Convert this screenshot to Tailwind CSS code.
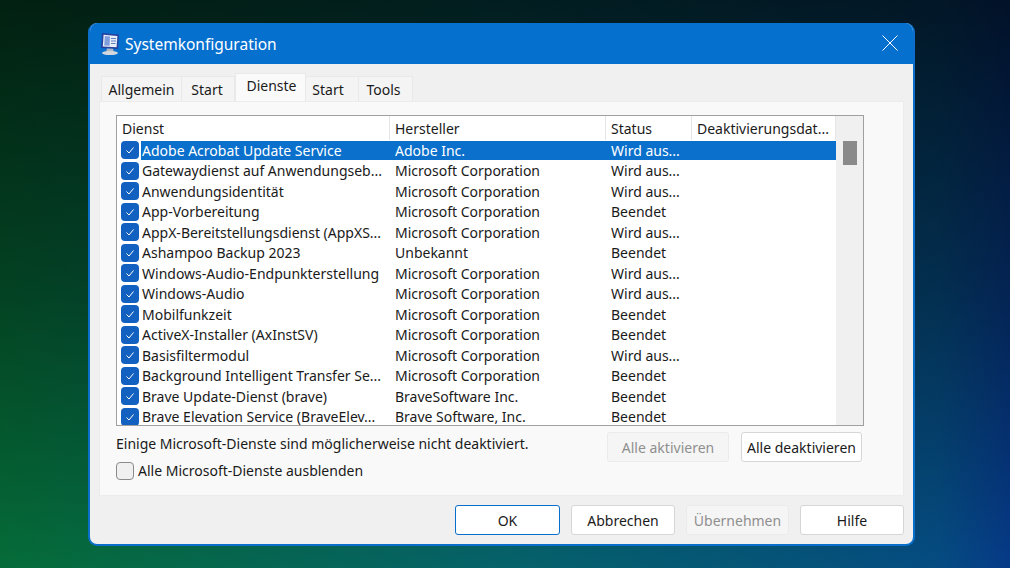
<!DOCTYPE html>
<html lang="de">
<head>
    <meta charset="UTF-8">
    <title>Systemkonfiguration</title>
    <script src="https://cdn.jsdelivr.net/npm/@tailwindcss/browser@4"></script>
</head>
<body class="font-['Noto_Sans','Open_Sans',sans-serif]">
    <div class="w-[1010px] h-[568px] overflow-hidden pt-[23px] pl-[88px] bg-[linear-gradient(to_bottom,rgba(0,0,0,0.7)_0%,rgba(0,0,0,0.4)_50%,rgba(0,0,0,0)_100%),linear-gradient(to_right,#056c38_0%,#05626a_50%,#054c82_93%,#063a88_100%)]">
        <!-- Dialog -->
        <div class="w-[827px] h-[523px] rounded-[9px] bg-[#f0f0f0] border-2 border-t-0 border-[#0a6fca] flex flex-col overflow-hidden">
            <!-- Title bar -->
            <div class="h-[41px] shrink-0 bg-[#0670cf] flex items-center justify-between -mx-[2px] pl-[11px] pr-[17px] text-white">
                <div class="flex items-center gap-[4px]">
                    <svg width="22" height="24" viewBox="0 0 22 24">
                        <path d="M3 1 L20 2.5 L19 17 L2 16 Z" fill="#27409e"/>
                        <path d="M4.6 2.8 L18.4 4 L17.6 15.2 L3.8 14.5 Z" fill="#e8edf6"/>
                        <path d="M5.8 4 L11 4.5 L10.6 13.8 L5.2 13.5 Z" fill="#7f9fdc"/>
                        <path d="M12 6.5 H17 M12 9 H17 M12 11.5 H16.6" stroke="#5f7fc0" stroke-width="1"/>
                        <path d="M8 16.5 L14 16.8 L15 20 L7 20 Z" fill="#b0b8c6"/>
                        <ellipse cx="11" cy="21" rx="8" ry="2" fill="#d4d8de"/>
                    </svg>
                    <span class="text-[15.5px] leading-none pt-[3px]">Systemkonfiguration</span>
                </div>
                <svg class="-mt-[1px]" width="16" height="16" viewBox="0 0 16 16" fill="none" stroke="#ffffff" stroke-width="1">
                    <path d="M0.5 0.5 L15.5 15.5 M15.5 0.5 L0.5 15.5"/>
                </svg>
            </div>

            <!-- Tabs -->
            <div class="h-[37px] shrink-0 flex items-end pl-[11px] text-[14px] text-[#1a1a1a]">
                <div class="w-[81px] h-[25px] bg-[#f4f4f4] border border-b-0 border-[#e9e9e9] flex items-center justify-center">Allgemein</div>
                <div class="w-[53px] h-[25px] bg-[#f4f4f4] border border-b-0 border-l-0 border-[#e9e9e9] flex items-center justify-center pr-[2px]">Start</div>
                <div class="w-[71px] h-[28px] bg-[#fafafa] border border-b-0 border-[#e9e9e9] flex items-start pt-[1px] justify-center pl-[2px]">Dienste</div>
                <div class="w-[53px] h-[25px] bg-[#f4f4f4] border border-b-0 border-l-0 border-[#e9e9e9] flex items-center justify-center pr-[8px]">Start</div>
                <div class="w-[54px] h-[25px] bg-[#f4f4f4] border border-b-0 border-l-0 border-[#e9e9e9] flex items-center justify-center pr-[4px]">Tools</div>
            </div>

            <!-- Panel -->
            <div class="mx-[9px] h-[395px] shrink-0 bg-[#f9f9f9] border border-[#ececec] pt-[13px] pl-[16px] pr-[40px] text-[14px] text-[#1a1a1a]">
                <!-- Service list -->
                <div class="w-[748px] h-[311px] bg-white border border-[#a0a0a0] flex overflow-hidden">
                    <div class="w-[719px] shrink-0">
                        <div class="h-[24px] flex items-center">
                            <div class="w-[273px] pl-[5px] border-r border-[#e5e5e5] h-full flex items-center">Dienst</div>
                            <div class="w-[216px] pl-[5px] border-r border-[#e5e5e5] h-full flex items-center">Hersteller</div>
                            <div class="w-[86px] pl-[5px] border-r border-[#e5e5e5] h-full flex items-center">Status</div>
                            <div class="w-[144px] pl-[5px] border-r border-[#e5e5e5] h-full flex items-center whitespace-nowrap">Deaktivierungsdat...</div>
                        </div>
                        <div id="rows"></div>
                    </div>
                    <!-- Scrollbar -->
                    <div class="w-[27px] bg-[#f0f0f0] pt-[25px] pl-[7px]">
                        <div class="w-[14px] h-[24px] bg-[#8a8a8a]"></div>
                    </div>
                </div>

                <div class="flex justify-between items-start w-[746px] mt-[6px]">
                    <div class="pt-[2px] leading-[20px]">Einige Microsoft-Dienste sind möglicherweise nicht deaktiviert.</div>
                    <div class="flex gap-[12px]">
                        <button class="w-[122px] h-[30px] rounded-[3px] bg-[#f5f5f5] border border-[#ebebeb] text-[#8f8f8f]">Alle aktivieren</button>
                        <button class="w-[121px] h-[30px] rounded-[3px] bg-white border border-[#d6d6d6]">Alle deaktivieren</button>
                    </div>
                </div>
                <div class="flex items-center gap-[4px] -mt-[2px]">
                    <div class="w-[18px] h-[18px] rounded-[4px] bg-[#f0f0f0] border border-[#8a8a8a]"></div>
                    <span>Alle Microsoft-Dienste ausblenden</span>
                </div>
            </div>

            <!-- Footer buttons -->
            <div class="flex justify-end gap-[11px] pt-[9px] pr-[9px] text-[14px] text-[#1a1a1a]">
                <button class="w-[105px] h-[30px] rounded-[3px] bg-white border border-[#0a6fca]">OK</button>
                <button class="w-[104px] h-[30px] rounded-[3px] bg-white border border-[#d6d6d6]">Abbrechen</button>
                <button class="w-[103px] h-[30px] rounded-[3px] bg-[#f5f5f5] border border-[#ebebeb] text-[#8f8f8f]">Übernehmen</button>
                <button class="w-[104px] h-[30px] rounded-[3px] bg-white border border-[#d6d6d6]">Hilfe</button>
            </div>
        </div>
    </div>

    <script>
        const services = [
            ['Adobe Acrobat Update Service', 'Adobe Inc.', 'Wird aus...'],
            ['Gatewaydienst auf Anwendungseb...', 'Microsoft Corporation', 'Wird aus...'],
            ['Anwendungsidentität', 'Microsoft Corporation', 'Wird aus...'],
            ['App-Vorbereitung', 'Microsoft Corporation', 'Beendet'],
            ['AppX-Bereitstellungsdienst (AppXS...', 'Microsoft Corporation', 'Wird aus...'],
            ['Ashampoo Backup 2023', 'Unbekannt', 'Beendet'],
            ['Windows-Audio-Endpunkterstellung', 'Microsoft Corporation', 'Wird aus...'],
            ['Windows-Audio', 'Microsoft Corporation', 'Wird aus...'],
            ['Mobilfunkzeit', 'Microsoft Corporation', 'Beendet'],
            ['ActiveX-Installer (AxInstSV)', 'Microsoft Corporation', 'Beendet'],
            ['Basisfiltermodul', 'Microsoft Corporation', 'Wird aus...'],
            ['Background Intelligent Transfer Se...', 'Microsoft Corporation', 'Beendet'],
            ['Brave Update-Dienst (brave)', 'BraveSoftware Inc.', 'Beendet'],
            ['Brave Elevation Service (BraveElev...', 'Brave Software, Inc.', 'Beendet']
        ];
        const check = '<svg width="12" height="12" viewBox="0 0 12 12" fill="none" stroke="#ffffff" stroke-width="1"><path d="M2.5 6.5 L5 9 L9.5 3.5"/></svg>';
        document.getElementById('rows').innerHTML = services.map((s, i) => {
            const sel = i === 0;
            return `<div class="h-[20.5px] flex items-center whitespace-nowrap">
                <div class="w-[24px] shrink-0 pl-[4px]"><div class="w-[18px] h-[18px] rounded-[4px] bg-[#1261c0] flex items-center justify-center">${check}</div></div>
                <div class="flex-1 h-[19px] flex items-center ${sel ? 'bg-[#0a70cc] text-white' : ''}">
                    <div class="w-[254px] pl-[1px] shrink-0">${s[0]}</div>
                    <div class="w-[216px] shrink-0">${s[1]}</div>
                    <div class="w-[86px] shrink-0">${s[2]}</div>
                </div>
            </div>`;
        }).join('');
    </script>
</body>
</html>
